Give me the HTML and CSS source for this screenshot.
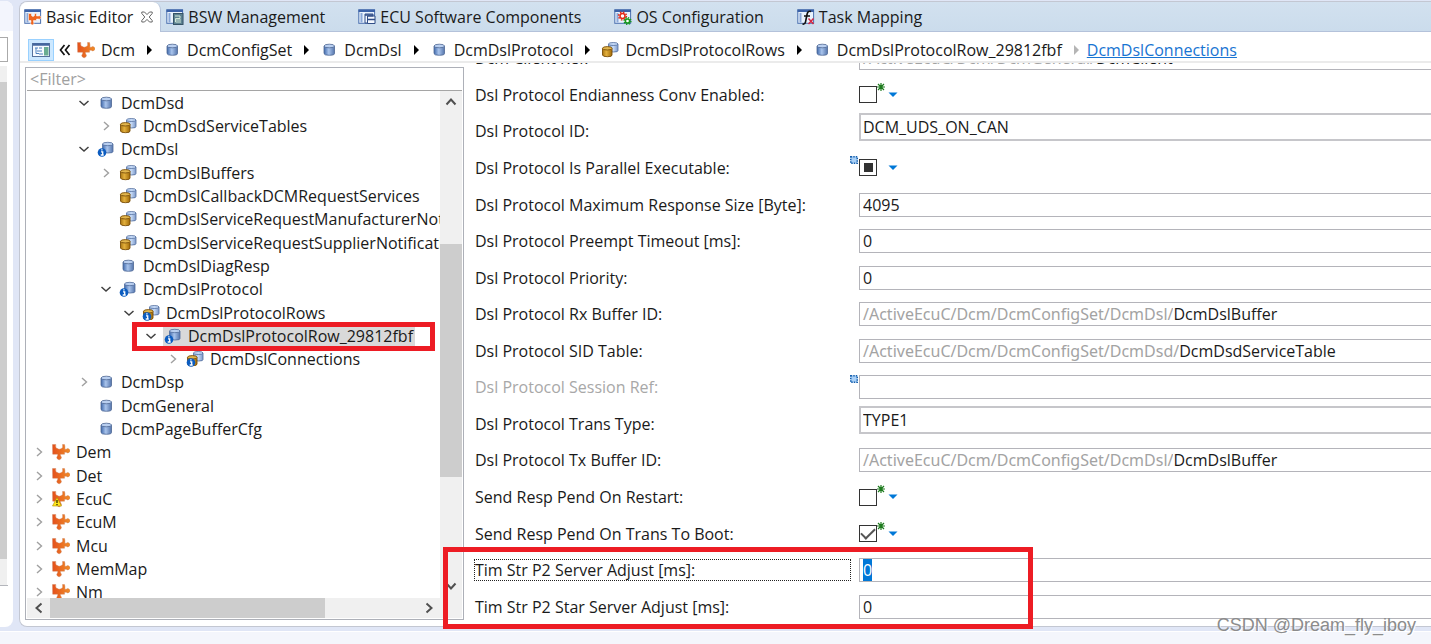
FILE: index.html
```html
<!DOCTYPE html>
<html lang="en">
<head>
    <meta charset="UTF-8">
    <meta name="viewport" content="width=device-width, initial-scale=1.0">
    <title>Basic Editor</title>
    <link rel="stylesheet" href="styles.css">
</head>
<body>
    <!-- Icon library -->
    <svg class="defs" aria-hidden="true">
        <linearGradient id="gBlue"><stop offset="0" stop-color="#3f69ac"/><stop offset=".45" stop-color="#a9c4ec"/><stop offset="1" stop-color="#5474ab"/></linearGradient>
        <linearGradient id="gGold"><stop offset="0" stop-color="#a87412"/><stop offset=".4" stop-color="#e3b03c"/><stop offset="1" stop-color="#a06a08"/></linearGradient>
        <linearGradient id="gPale"><stop offset="0" stop-color="#87a8dc"/><stop offset=".5" stop-color="#c6daf6"/><stop offset="1" stop-color="#7b97c8"/></linearGradient>
        <linearGradient id="gOrange"><stop offset="0" stop-color="#e4501c"/><stop offset="1" stop-color="#f08c28"/></linearGradient>
        <symbol id="cyl" viewBox="0 0 18 18">
            <path d="M4 5v7.500q0 1.800 5.500 1.800t5-1.800V5z" fill="url(#gBlue)" stroke="#4e6793" stroke-width=".8"/>
            <ellipse cx="9.300" cy="5" rx="5.200" ry="1.800" fill="#b9cff0" stroke="#4e6793" stroke-width=".8"/>
        </symbol>
        <symbol id="multi" viewBox="0 0 18 18">
            <path d="M7.500 3v6.500q0 1.500 5 1.500t4.500-1.500V3z" fill="url(#gPale)" stroke="#506c9c" stroke-width=".8"/>
            <ellipse cx="12.300" cy="3" rx="4.700" ry="1.500" fill="#c3d8f6" stroke="#506c9c" stroke-width=".8"/>
            <path d="M1.500 7.500V14q0 1.700 5 1.700T11 14V7.500z" fill="url(#gGold)" stroke="#7a4f0a" stroke-width=".9"/>
            <ellipse cx="6.300" cy="7.300" rx="4.800" ry="1.700" fill="#e2b64d" stroke="#7a4f0a" stroke-width=".9"/>
        </symbol>
        <symbol id="info" viewBox="0 0 18 18">
            <circle cx="5" cy="12.500" r="4.300" fill="#0b5cc0"/>
            <path d="M4 11.800h1.700v3M3.700 15h3M4.900 9.200v1.300" fill="none" stroke="#fff" stroke-width="1.300"/>
        </symbol>
        <symbol id="cylinfo" viewBox="0 0 18 18">
            <path d="M5.500 4v7.500q0 1.500 5.500 1.500t5-1.500V4z" fill="url(#gBlue)" stroke="#506c9c" stroke-width=".8"/>
            <ellipse cx="10.800" cy="4" rx="5.200" ry="1.700" fill="#b9cff0" stroke="#506c9c" stroke-width=".8"/>
            <use href="#info"/>
        </symbol>
        <symbol id="multiinfo" viewBox="0 0 18 18"><use href="#multi"/><use href="#info"/></symbol>
        <symbol id="puzzle" viewBox="0 0 18 18">
            <path d="M.500 1.500h3.300q-.8 4 1.700 4 .8.700 1.800.7t2-.7q2 0 1.200-4h2q.7 2 .3 4.700h1.500a2.100 2.100 0 1 1 0 3h-1.800v2H8.300l.3 1.700a2.200 2.200 0 1 1-3 0l.2-1.700H.700z" fill="url(#gOrange)" stroke="#c87a50" stroke-width=".4"/>
        </symbol>
        <symbol id="puzzlewarn" viewBox="0 0 18 18">
            <use href="#puzzle"/>
            <path d="M5 7.500 9.500 16H.500z" fill="#ffe71a" stroke="#b08a00" stroke-width=".6"/>
            <path d="M5 10v3M5 14v1.300" stroke="#332b00" stroke-width="1.300"/>
        </symbol>
        <symbol id="down" viewBox="0 0 12 12"><path d="M1.500 4 6 8l4.500-4" fill="none" stroke="#404040" stroke-width="1.500"/></symbol>
        <symbol id="right" viewBox="0 0 12 12"><path d="M4 2 8.500 6 4 10" fill="none" stroke="#a0a0a0" stroke-width="1.400"/></symbol>
        <symbol id="arrow" viewBox="0 0 12 12"><path d="m1.500 8.500 4.500-5 4.500 5" fill="none" stroke="#505050" stroke-width="2"/></symbol>
        <symbol id="window" viewBox="0 0 18 18">
            <rect x=".800" y="1.800" width="15.800" height="13.500" fill="#e9f2fd" stroke="#4a6fae"/>
            <path d="M.500 2.800h16.500" stroke="#3c62a8" stroke-width="2.400"/>
            <path d="M3.500 5v9.500" stroke="#8aa8d8" stroke-width="2"/>
        </symbol>
        <symbol id="star" viewBox="0 0 8 8"><path d="M4 0v8M0 4h8M1 1l6 6M7 1 1 7" stroke="#1e7b1e" stroke-width="1.200"/></symbol>
        <symbol id="tri" viewBox="0 0 10 6"><path d="M.500.500h9L5 5z" fill="#0078d7"/></symbol>
        <symbol id="sel" viewBox="0 0 8 8"><rect x=".750" y=".750" width="6.500" height="6.500" fill="#a9d0f7" stroke="#1560b0" stroke-width="1.500" stroke-dasharray="1.500 1"/></symbol>
    </svg>

    <div class="workbench">
        <div class="side-view">
            <div class="side-tab"></div>
            <div class="side-filter"></div>
            <div class="side-scroll"><span></span></div>
            <div class="side-end"></div>
        </div>

        <main class="editor">
            <nav class="tabs">
                <div class="tab active">
                    <button type="button"><svg class="icon"><use href="#window"/><path d="M4.500 5.500h3q-.5 3 1.500 3t1.500-3h2V8h2a1.700 1.700 0 1 1 0 3h-2v1.500h-3V14a1.700 1.700 0 1 1-2.500 0v-1.500H4.500z" fill="#ee641f" stroke="#fff" stroke-width=".5"/></svg>Basic Editor</button>
                    <button type="button" class="close" aria-label="Close"><svg width="12" height="12" viewBox="0 0 12 12"><path d="M.800 1h2.700L6 3.600 8.500 1h2.700v1.500L8.200 6l3 3.500V11H8.500L6 8.400 3.500 11H.800V9.500l3-3.500-3-3.500z" fill="#fff" stroke="#666"/></svg></button>
                </div>
                <div class="tab"><button type="button"><svg class="icon"><use href="#window"/><rect x="7.500" y="5.500" width="9.500" height="11" fill="#5d8291" stroke="#365366"/><path d="M9 8h5v2.500H9.500V14H15M10 12h5" fill="none" stroke="#d3e8d8"/></svg>BSW Management</button></div>
                <div class="tab"><button type="button"><svg class="icon"><use href="#window"/><path d="M7 6h8v2H9.500v7H7zM9.500 8H17v7.500H9.500z" fill="#f5f9ff" stroke="#314e88"/><path d="M9.500 11.500H17M7 7h8" stroke="#314e88" stroke-width="1.500"/></svg>ECU Software Components</button></div>
                <div class="tab"><button type="button"><svg class="icon"><use href="#window"/><circle cx="8.500" cy="8" r="2.500" fill="#fff" stroke="#e52b18" stroke-width="1.500"/><circle cx="8.500" cy="8" r="3.900" fill="none" stroke="#e52b18" stroke-width="1.500" stroke-dasharray="1.500 1.560"/><circle cx="13.500" cy="13" r="2.100" fill="#fff" stroke="#16991c" stroke-width="1.500"/><circle cx="13.500" cy="13" r="3.400" fill="none" stroke="#16991c" stroke-width="1.400" stroke-dasharray="1.300 1.370"/></svg>OS Configuration</button></div>
                <div class="tab"><button type="button"><svg class="icon"><use href="#window"/><path d="M14 3.500q-3.200-1.300-4 3L8.500 14q-.5 2.500-3 2M7 8h6" fill="none" stroke="#111" stroke-width="1.600"/><path d="m11.500 10.500 5 5.500m0-5.500-5 5.500" stroke="#d42842" stroke-width="1.500"/></svg>Task Mapping</button></div>
            </nav>

            <nav class="breadcrumb">
                <button type="button" class="toggle" aria-label="Show tree"><svg width="18" height="16" viewBox="0 0 18 16"><rect x=".5" y="1.500" width="17" height="13" fill="#f7fbff" stroke="#56729c"/><path d="M1 2.500h16" stroke="#44679f" stroke-width="2.500"/><rect x="12" y="5" width="4.500" height="8.500" fill="#69ad91"/><path d="M3 6h3M4 6v5.500h3M5 9h5M7 12h4M7 6h3" fill="none" stroke="#4c80bd"/></svg></button>
                <button type="button" class="back" aria-label="Back"><svg width="12" height="12" viewBox="0 0 12 12"><path d="M5.500 1 1.500 6l4 5M10.500 1l-4 5 4 5" fill="none" stroke="#111" stroke-width="1.700"/></svg></button>
                <a href="#"><svg class="icon"><use href="#puzzle"/></svg>Dcm</a>
                <span class="sep"></span>
                <a href="#"><svg class="icon"><use href="#cyl"/></svg>DcmConfigSet</a>
                <span class="sep"></span>
                <a href="#"><svg class="icon"><use href="#cyl"/></svg>DcmDsl</a>
                <span class="sep"></span>
                <a href="#"><svg class="icon"><use href="#cyl"/></svg>DcmDslProtocol</a>
                <span class="sep"></span>
                <a href="#"><svg class="icon"><use href="#multi"/></svg>DcmDslProtocolRows</a>
                <span class="sep"></span>
                <a href="#"><svg class="icon"><use href="#cyl"/></svg>DcmDslProtocolRow_29812fbf</a>
                <span class="sep light"></span>
                <a href="#" class="next">DcmDslConnections</a>
            </nav>

            <div class="content">
                <section class="tree-pane">
                    <input type="text" class="filter" placeholder="&lt;Filter&gt;" aria-label="Filter">
                    <div class="tree-area">
                        <div class="tree-view">
                            <ul class="tree">
                                <li class="d2"><button type="button" aria-label="Collapse"><svg><use href="#down"/></svg></button><span class="item"><svg class="icon"><use href="#cyl"/></svg>DcmDsd</span></li>
                                <li class="d3"><button type="button" aria-label="Expand"><svg><use href="#right"/></svg></button><span class="item"><svg class="icon"><use href="#multi"/></svg>DcmDsdServiceTables</span></li>
                                <li class="d2"><button type="button" aria-label="Collapse"><svg><use href="#down"/></svg></button><span class="item"><svg class="icon"><use href="#cylinfo"/></svg>DcmDsl</span></li>
                                <li class="d3"><button type="button" aria-label="Expand"><svg><use href="#right"/></svg></button><span class="item"><svg class="icon"><use href="#multi"/></svg>DcmDslBuffers</span></li>
                                <li class="d3 leaf"><span class="item"><svg class="icon"><use href="#multi"/></svg>DcmDslCallbackDCMRequestServices</span></li>
                                <li class="d3 leaf"><span class="item"><svg class="icon"><use href="#multi"/></svg>DcmDslServiceRequestManufacturerNotifications</span></li>
                                <li class="d3 leaf"><span class="item"><svg class="icon"><use href="#multi"/></svg>DcmDslServiceRequestSupplierNotifications</span></li>
                                <li class="d3 leaf"><span class="item"><svg class="icon"><use href="#cyl"/></svg>DcmDslDiagResp</span></li>
                                <li class="d3"><button type="button" aria-label="Collapse"><svg><use href="#down"/></svg></button><span class="item"><svg class="icon"><use href="#cylinfo"/></svg>DcmDslProtocol</span></li>
                                <li class="d4"><button type="button" aria-label="Collapse"><svg><use href="#down"/></svg></button><span class="item"><svg class="icon"><use href="#multiinfo"/></svg>DcmDslProtocolRows</span></li>
                                <li class="d5 current"><button type="button" aria-label="Collapse"><svg><use href="#down"/></svg></button><span class="item"><svg class="icon"><use href="#cylinfo"/></svg>DcmDslProtocolRow_29812fbf</span><span class="mark mark-row"></span></li>
                                <li class="d6"><button type="button" aria-label="Expand"><svg><use href="#right"/></svg></button><span class="item"><svg class="icon"><use href="#multiinfo"/></svg>DcmDslConnections</span></li>
                                <li class="d2"><button type="button" aria-label="Expand"><svg><use href="#right"/></svg></button><span class="item"><svg class="icon"><use href="#cyl"/></svg>DcmDsp</span></li>
                                <li class="d2 leaf"><span class="item"><svg class="icon"><use href="#cyl"/></svg>DcmGeneral</span></li>
                                <li class="d2 leaf"><span class="item"><svg class="icon"><use href="#cyl"/></svg>DcmPageBufferCfg</span></li>
                                <li><button type="button" aria-label="Expand"><svg><use href="#right"/></svg></button><span class="item"><svg class="icon"><use href="#puzzle"/></svg>Dem</span></li>
                                <li><button type="button" aria-label="Expand"><svg><use href="#right"/></svg></button><span class="item"><svg class="icon"><use href="#puzzle"/></svg>Det</span></li>
                                <li><button type="button" aria-label="Expand"><svg><use href="#right"/></svg></button><span class="item"><svg class="icon"><use href="#puzzlewarn"/></svg>EcuC</span></li>
                                <li><button type="button" aria-label="Expand"><svg><use href="#right"/></svg></button><span class="item"><svg class="icon"><use href="#puzzle"/></svg>EcuM</span></li>
                                <li><button type="button" aria-label="Expand"><svg><use href="#right"/></svg></button><span class="item"><svg class="icon"><use href="#puzzle"/></svg>Mcu</span></li>
                                <li><button type="button" aria-label="Expand"><svg><use href="#right"/></svg></button><span class="item"><svg class="icon"><use href="#puzzle"/></svg>MemMap</span></li>
                                <li><button type="button" aria-label="Expand"><svg><use href="#right"/></svg></button><span class="item"><svg class="icon"><use href="#puzzle"/></svg>Nm</span></li>
                            </ul>
                        </div>
                        <div class="vscroll">
                            <button type="button" aria-label="Scroll up"><svg><use href="#arrow"/></svg></button>
                            <div class="track"><span></span></div>
                            <button type="button" class="to-down" aria-label="Scroll down"><svg><use href="#arrow"/></svg></button>
                        </div>
                        <div class="hscroll">
                            <button type="button" class="to-left" aria-label="Scroll left"><svg><use href="#arrow"/></svg></button>
                            <div class="track"><span></span></div>
                            <button type="button" class="to-right" aria-label="Scroll right"><svg><use href="#arrow"/></svg></button>
                        </div>
                    </div>
                </section>

                <section class="form-pane">
                    <form class="form">
                        <div class="row"><label for="client">Dcm Client Ref:</label><div class="field ref"><span>/ActiveEcuC/Dcm/DcmGeneral/</span><input type="text" id="client" value="DcmClient"></div></div>
                        <div class="row"><label for="endian">Dsl Protocol Endianness Conv Enabled:</label><div class="field check"><input type="checkbox" id="endian"><svg class="star"><use href="#star"/></svg><button type="button" aria-label="Options"><svg><use href="#tri"/></svg></button></div></div>
                        <div class="row combo"><label for="protocolId">Dsl Protocol ID:</label><div class="field"><select id="protocolId"><option>DCM_UDS_ON_CAN</option></select></div></div>
                        <div class="row"><label for="parallel">Dsl Protocol Is Parallel Executable:</label><div class="field check"><svg class="unset"><use href="#sel"/></svg><input type="checkbox" id="parallel" class="mixed"><span class="star"></span><button type="button" aria-label="Options"><svg><use href="#tri"/></svg></button></div></div>
                        <div class="row"><label for="maxSize">Dsl Protocol Maximum Response Size [Byte]:</label><div class="field"><input type="text" id="maxSize" value="4095"></div></div>
                        <div class="row"><label for="preempt">Dsl Protocol Preempt Timeout [ms]:</label><div class="field"><input type="text" id="preempt" value="0"></div></div>
                        <div class="row"><label for="priority">Dsl Protocol Priority:</label><div class="field"><input type="text" id="priority" value="0"></div></div>
                        <div class="row"><label for="rx">Dsl Protocol Rx Buffer ID:</label><div class="field ref"><span>/ActiveEcuC/Dcm/DcmConfigSet/DcmDsl/</span><input type="text" id="rx" value="DcmDslBuffer"></div></div>
                        <div class="row"><label for="sid">Dsl Protocol SID Table:</label><div class="field ref"><span>/ActiveEcuC/Dcm/DcmConfigSet/DcmDsd/</span><input type="text" id="sid" value="DcmDsdServiceTable"></div></div>
                        <div class="row off"><label for="session">Dsl Protocol Session Ref:</label><div class="field"><svg class="unset"><use href="#sel"/></svg><input type="text" id="session"></div></div>
                        <div class="row combo"><label for="trans">Dsl Protocol Trans Type:</label><div class="field"><select id="trans"><option>TYPE1</option></select></div></div>
                        <div class="row"><label for="tx">Dsl Protocol Tx Buffer ID:</label><div class="field ref"><span>/ActiveEcuC/Dcm/DcmConfigSet/DcmDsl/</span><input type="text" id="tx" value="DcmDslBuffer"></div></div>
                        <div class="row"><label for="restart">Send Resp Pend On Restart:</label><div class="field check"><input type="checkbox" id="restart"><svg class="star"><use href="#star"/></svg><button type="button" aria-label="Options"><svg><use href="#tri"/></svg></button></div></div>
                        <div class="row"><label for="boot">Send Resp Pend On Trans To Boot:</label><div class="field check"><input type="checkbox" id="boot" checked><svg class="star"><use href="#star"/></svg><button type="button" aria-label="Options"><svg><use href="#tri"/></svg></button></div></div>
                        <div class="row focused"><label for="p2">Tim Str P2 Server Adjust [ms]:</label><div class="field"><input type="text" id="p2" value="0"></div></div>
                        <div class="row"><label for="p2star">Tim Str P2 Star Server Adjust [ms]:</label><div class="field"><input type="text" id="p2star" value="0"></div></div>
                    </form>
                </section>
                <div class="mark mark-fields"></div>
            </div>
        </main>
    </div>
    <footer class="status"></footer>
    <div class="watermark">CSDN @Dream_fly_iboy</div>

    <script>
        // start with the adjust value selected
        document.getElementById('p2').select();
    </script>
</body>
</html>
```
FILE: styles.css
```css
* {
    box-sizing: border-box;
}
body {
    margin: 0;
    height: 100vh;
    display: flex;
    flex-direction: column;
    overflow: hidden;
    position: relative;
    background-color: #e0e6f6;
    color: #1a1a1a;
    font-family: "Open Sans", "Noto Sans", sans-serif;
    font-size: 16px;
    line-height: 20px;
}
button, input, select {
    font: inherit;
    color: inherit;
}
button {
    padding: 0;
    border: none;
    background: none;
    display: flex;
    align-items: center;
    justify-content: center;
}
.defs {
    position: absolute;
    width: 0;
    height: 0;
}
.icon {
    width: 18px;
    height: 18px;
    flex: none;
}
.workbench {
    flex: 1;
    min-height: 0;
    display: flex;
    gap: 6px;
    padding: 1px 0 4px;
}

/* Neighbour view, only its right edge is visible */
.side-view {
    width: 13px;
    flex: none;
    display: flex;
    flex-direction: column;
    background-color: #fff;
    border-radius: 0 8px 8px 0;
    overflow: hidden;
}
.side-tab {
    height: 30px;
    background-color: #f3f5fd;
}
.side-filter {
    height: 25px;
    width: 8px;
    margin-top: 6px;
    border: 1px solid #aaa;
    border-left: none;
}
.side-scroll {
    flex: 1;
    width: 7px;
    margin-top: 4px;
    padding: 16px 0 26px;
    background-color: #f0f0f0;
    display: flex;
}
.side-scroll span {
    flex: 1;
    background-color: #cdcdcd;
}
.side-end {
    height: 42px;
    width: 8px;
    border-top: 1px solid #b4b6bc;
}

/* Editor and tabs */
.editor {
    flex: 1;
    min-width: 0;
    display: flex;
    flex-direction: column;
    background-color: #fff;
    border: 1px solid #c3c7d2;
    border-right: none;
    border-radius: 8px 0 0 8px;
}
.tabs {
    height: 30px;
    flex: none;
    display: flex;
    background: linear-gradient(#d2e1ef, #cbdcec);
    border-bottom: 1px solid #b4c2da;
    border-radius: 8px 0 0 0;
}
.tab {
    display: flex;
    padding: 0 28px 0 5px;
}
.tab button {
    gap: 4px;
    white-space: nowrap;
}
.tab.active {
    height: 30px;
    padding: 0 7px 0 4px;
    background-color: #fff;
    border-right: 1px solid #b4c2da;
    border-radius: 8px 8px 0 0;
}
.tab .close {
    margin-left: 8px;
}

/* Breadcrumb */
.breadcrumb {
    height: 31px;
    flex: none;
    display: flex;
    align-items: center;
    padding: 6px 8px 0;
    border-bottom: 2px solid #ebebeb;
    white-space: nowrap;
}
.breadcrumb a {
    display: flex;
    align-items: center;
    gap: 6px;
    color: inherit;
    text-decoration: none;
}
.breadcrumb .next {
    color: #1874d2;
    text-decoration: underline;
}
.toggle {
    width: 26px;
    height: 22px;
    background-color: #cce8ff;
    border: 1px solid #99d1ff;
}
.back {
    margin: 0 6px 0 5px;
}
.sep {
    margin: 0 11px 0 12px;
    border: 5px solid transparent;
    border-left-color: #000;
    border-right: none;
}
.sep.light {
    margin-right: 8px;
    border-left-color: #b5b5b5;
}

/* Tree */
.content {
    flex: 1;
    min-height: 0;
    display: flex;
    position: relative;
    padding-left: 5px;
}
.tree-pane {
    width: 439px;
    flex: none;
    display: flex;
    flex-direction: column;
    margin: 4px 0 6px;
    padding: 0 1px 1px;
    border: 1px solid #adb0b8;
}
.filter {
    height: 23px;
    flex: none;
    width: 100%;
    padding: 0 3px;
    border: none;
    border-bottom: 1px solid #a5a5a5;
    outline: none;
}
.filter::placeholder {
    color: #a0a0a0;
}
.tree-area {
    flex: 1;
    min-height: 0;
    display: grid;
    grid-template-columns: 1fr 22px;
    grid-template-rows: 1fr 20px;
}
.tree-view {
    min-width: 0;
    min-height: 0;
    overflow: hidden;
}
.tree {
    list-style: none;
    margin: 0;
    padding: 0;
    height: calc(100% + 6px);
    display: grid;
    grid-template-columns: minmax(0, 1fr);
    grid-auto-rows: 1fr;
}
.tree li {
    min-height: 0;
    display: flex;
    align-items: center;
    gap: 5px;
    padding-left: 5px;
    white-space: nowrap;
    position: relative;
}
.tree li.leaf::before {
    content: "";
    width: 14px;
    flex: none;
}
.tree li.d2 { padding-left: 50px; }
.tree li.d3 { padding-left: 72px; }
.tree li.d4 { padding-left: 95px; }
.tree li.d5 { padding-left: 117px; }
.tree li.d6 { padding-left: 139px; }
.tree button {
    width: 14px;
    flex: none;
}
.tree button svg, .vscroll svg, .hscroll svg {
    width: 12px;
    height: 12px;
}
.item {
    display: flex;
    align-items: center;
    gap: 6px;
    padding: 0 2px 0 1px;
}
.current .item {
    background-color: #d9d9d9;
}
.vscroll {
    grid-row: span 2;
    grid-column: 2;
    display: flex;
    flex-direction: column;
    background-color: #f0f0f0;
}
.vscroll button {
    height: 22px;
}
.vscroll .to-down {
    margin-bottom: 21px;
}
.to-down svg {
    transform: rotate(180deg);
}
.vscroll .track {
    flex: 1;
    padding: 131px 0 98px;
    display: flex;
}
.hscroll {
    grid-row: 2;
    grid-column: 1;
    display: flex;
    background-color: #f0f0f0;
}
.hscroll button {
    width: 23px;
}
.to-left svg {
    transform: rotate(-90deg);
}
.to-right svg {
    transform: rotate(90deg);
}
.hscroll .track {
    flex: 1;
    padding-right: 92px;
    display: flex;
}
.track span {
    flex: 1;
    background-color: #cdcdcd;
}

/* Form */
.form-pane {
    flex: 1;
    min-width: 0;
    margin-bottom: 1px;
    overflow: hidden;
    display: flex;
    flex-direction: column;
    justify-content: flex-end;
}
.form {
    height: calc(100% + 23px);
    flex: none;
    display: grid;
    grid-auto-rows: 1fr;
    padding-left: 11px;
}
.row {
    min-height: 0;
    display: grid;
    grid-template-columns: 375px 1fr;
    column-gap: 9px;
    align-items: center;
}
.field {
    position: relative;
    display: flex;
    align-items: center;
    height: 24px;
}
.field input[type="text"], .field select {
    width: 100%;
    height: 100%;
    padding: 0 3px;
    border: 1px solid #b4b4ba;
    border-right: none;
    border-radius: 0;
    background-color: #fff;
    outline: none;
    appearance: none;
}
.combo .field {
    height: 28px;
    align-self: start;
}
.combo .field select {
    padding: 0 2px;
    border-width: 2px;
    border-color: #c6c6ca;
}
.ref {
    padding-left: 3px;
    border: 1px solid #b4b4ba;
    border-right: none;
}
.ref span {
    color: #a3a3a3;
    font-family: "Noto Sans", sans-serif;
}
.field.ref input {
    flex: 1;
    width: auto;
    padding: 0;
    border: none;
}
.off label {
    color: #a8a8a8;
}
.focused label {
    outline: 1px dotted #222;
}
.focused input::selection {
    background-color: #0078d7;
    color: #fff;
}
.check input {
    appearance: none;
    width: 18px;
    height: 17px;
    margin: 0;
    border: 1px solid #333;
    display: grid;
    place-content: center;
}
.check input:checked::before {
    content: "";
    width: 12px;
    height: 6px;
    margin-top: -3px;
    border: solid #555;
    border-width: 0 0 2px 2px;
    transform: rotate(-45deg);
}
.check input.mixed::before {
    content: "";
    width: 9px;
    height: 9px;
    background-color: #333;
}
.star {
    width: 8px;
    height: 8px;
    align-self: flex-start;
}
.check button {
    margin-left: 3px;
}
.check button svg {
    width: 10px;
    height: 6px;
}
.unset {
    position: absolute;
    left: -9px;
    top: 0;
    width: 8px;
    height: 8px;
}

/* Red callouts */
.mark {
    position: absolute;
    border: 5px solid #ed1c24;
    pointer-events: none;
}
.mark-row {
    left: 105px;
    right: 5px;
    top: -2px;
    bottom: -3px;
}
.mark-fields {
    left: 423px;
    width: 590px;
    bottom: -3px;
    height: 82px;
}
.status {
    height: 13px;
    flex: none;
    background-color: #f4f6fc;
    border-top: 1px solid #fff;
}
.watermark {
    position: absolute;
    right: 15px;
    bottom: 8px;
    color: #8c8c8c;
    font-family: "Liberation Sans", Arial, sans-serif;
    font-size: 18px;
    line-height: 22px;
    text-shadow: 1px 1px 0 #fff;
}
```
